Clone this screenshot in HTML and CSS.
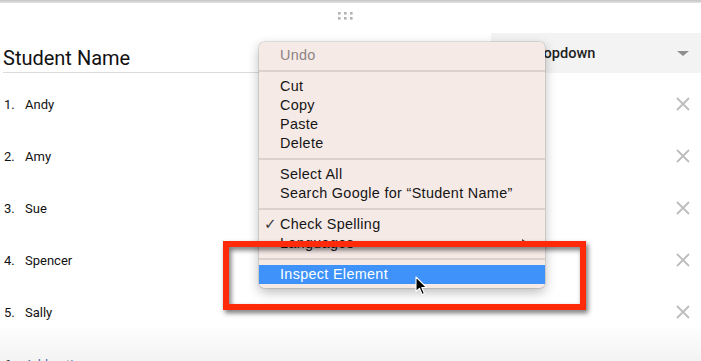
FILE: index.html
```html
<!DOCTYPE html>
<html>
<head>
<meta charset="utf-8">
<link rel="stylesheet" href="styles.css">
</head>
<body>
<div class="page">
  <div class="topbar"></div>
  <div class="handle">
    <svg width="16" height="9" viewBox="0 0 16 9" class="dots">
      <rect x="0" y="0" width="2.6" height="2.6" fill="#b3b3b3"/>
      <rect x="6" y="0" width="2.6" height="2.6" fill="#b3b3b3"/>
      <rect x="12" y="0" width="2.6" height="2.6" fill="#b3b3b3"/>
      <rect x="0" y="5" width="2.6" height="2.6" fill="#b3b3b3"/>
      <rect x="6" y="5" width="2.6" height="2.6" fill="#b3b3b3"/>
      <rect x="12" y="5" width="2.6" height="2.6" fill="#b3b3b3"/>
    </svg>
  </div>
  <div class="header">
    <div class="title">Student Name</div>
    <div class="dropdown">
      <span class="dd-label">Dropdown</span>
      <span class="dd-arrow"></span>
    </div>
  </div>
  <ol class="options">
    <li class="row"><span class="num">1.</span><span class="name">Andy</span><svg class="x" width="14" height="14" viewBox="0 0 14 14"><path d="M1 1 L13 13 M13 1 L1 13" stroke="#bdbdbd" stroke-width="1.8"/></svg></li>
    <li class="row"><span class="num">2.</span><span class="name">Amy</span><svg class="x" width="14" height="14" viewBox="0 0 14 14"><path d="M1 1 L13 13 M13 1 L1 13" stroke="#bdbdbd" stroke-width="1.8"/></svg></li>
    <li class="row"><span class="num">3.</span><span class="name">Sue</span><svg class="x" width="14" height="14" viewBox="0 0 14 14"><path d="M1 1 L13 13 M13 1 L1 13" stroke="#bdbdbd" stroke-width="1.8"/></svg></li>
    <li class="row"><span class="num">4.</span><span class="name">Spencer</span><svg class="x" width="14" height="14" viewBox="0 0 14 14"><path d="M1 1 L13 13 M13 1 L1 13" stroke="#bdbdbd" stroke-width="1.8"/></svg></li>
    <li class="row"><span class="num">5.</span><span class="name">Sally</span><svg class="x" width="14" height="14" viewBox="0 0 14 14"><path d="M1 1 L13 13 M13 1 L1 13" stroke="#bdbdbd" stroke-width="1.8"/></svg></li>
    <li class="row"><span class="num">6.</span><span class="name add">Add option</span></li>
  </ol>

  <div class="menu">
    <div class="item disabled">Undo</div>
    <div class="sep"></div>
    <div class="item">Cut</div>
    <div class="item">Copy</div>
    <div class="item">Paste</div>
    <div class="item">Delete</div>
    <div class="sep"></div>
    <div class="item">Select All</div>
    <div class="item">Search Google for “Student Name”</div>
    <div class="sep"></div>
    <div class="item checked"><span class="check">✓</span>Check Spelling</div>
    <div class="item sub">Languages<span class="sub-arrow"></span></div>
    <div class="sep"></div>
    <div class="item active">Inspect Element</div>
  </div>

  <div class="highlight-box"></div>

  <svg class="cursor" width="13" height="20" viewBox="0 0 13 20">
    <path d="M1 1 L1 15.5 L4.5 12.3 L7.2 18.6 L9.4 17.6 L6.8 11.5 L11.6 11.5 Z" fill="#000" stroke="#fff" stroke-width="1.1" stroke-linejoin="round"/>
  </svg>
</div>
</body>
</html>
```

FILE: styles.css
```css
html {
  height: 100%;
  background: linear-gradient(to bottom, #ffffff 0, #ffffff 325px, #f3f3f3 361px);
}
body {
  margin: 0;
  font-family: Roboto, "Liberation Sans", sans-serif;
  color: #202020;
  overflow: hidden;
  height: 361px;
}
.page {
  position: relative;
  height: 361px;
}
.topbar {
  height: 3px;
  background: linear-gradient(to bottom, #c4c4c4, #e4e4e4);
}
.handle {
  height: 30px;
  display: flex;
  justify-content: center;
  align-items: flex-start;
  padding-right: 9px;
  box-sizing: border-box;
  padding-top: 9px;
}
.dots { display: block; }
.header {
  display: flex;
  height: 40px;
  padding-left: 3px;
}
.title {
  flex: 1;
  align-self: flex-end;
  font-size: 20px;
  line-height: 24px;
  padding-bottom: 2px;
  border-bottom: 1px solid #dcdcdc;
  margin-right: 11px;
  color: #111;
}
.dropdown {
  width: 210px;
  box-sizing: border-box;
  background: #f3f3f3;
  display: flex;
  align-items: center;
  justify-content: space-between;
  padding-left: 38px;
  padding-right: 12px;
}
.dd-label {
  font-size: 14.6px;
  font-weight: 500;
  color: #1e1e1e;
  margin-top: -1px;
}
.dd-arrow {
  width: 0;
  height: 0;
  border-left: 6px solid transparent;
  border-right: 6px solid transparent;
  border-top: 5px solid #8f8f8f;
  margin-top: 1px;
}
.options {
  list-style: none;
  margin: 5px 0 0;
  padding: 0 11px 0 4px;
}
.row {
  display: flex;
  align-items: center;
  height: 52px;
  font-size: 13px;
  color: #111;
}
.num {
  width: 21px;
}
.name {
  flex: 1;
}
.add {
  color: #4a6fa5;
}
.x { display: block; }

.menu {
  position: absolute;
  left: 259px;
  top: 42px;
  width: 286px;
  box-sizing: border-box;
  padding: 4px 0;
  background: #f6eae7;
  border-radius: 5px;
  box-shadow: 0 0 0 0.5px rgba(0,0,0,0.18), 0 4px 12px rgba(0,0,0,0.28);
  font-family: "Liberation Sans", Arial, sans-serif;
  font-size: 14.4px;
  letter-spacing: 0.32px;
  color: #151515;
}
.item {
  position: relative;
  height: 19px;
  line-height: 19px;
  padding-left: 21px;
  white-space: nowrap;
}
.disabled { color: #8c8484; }
.sep {
  height: 2px;
  margin: 5px 0;
  background: #ddd1ce;
}
.check {
  position: absolute;
  left: 5px;
  top: 0;
  font-family: "DejaVu Sans", sans-serif;
  font-size: 15px;
  letter-spacing: 0;
  color: #3a3a3a;
}
.sub-arrow {
  position: absolute;
  right: 17px;
  top: 5px;
  width: 0;
  height: 0;
  border-top: 4px solid transparent;
  border-bottom: 4px solid transparent;
  border-left: 6px solid #444;
}
.active {
  background: #3e92f9;
  color: #fff;
}
.highlight-box {
  position: absolute;
  left: 223px;
  top: 241px;
  width: 363px;
  height: 69px;
  box-sizing: border-box;
  border: 6px solid #fe2a0a;
  filter: drop-shadow(2px 3px 2.5px rgba(0,0,0,0.55));
}
.cursor {
  position: absolute;
  left: 415px;
  top: 276px;
}
```
